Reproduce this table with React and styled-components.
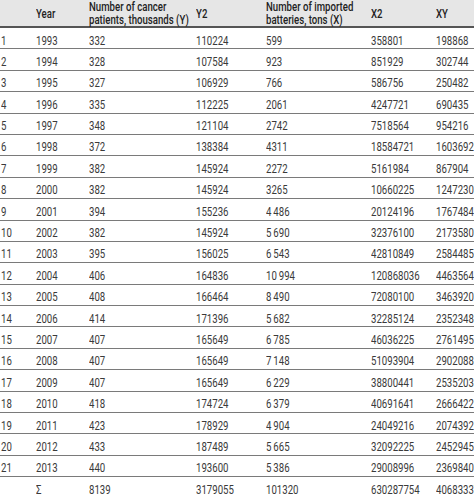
import React from 'react';
import styled, { createGlobalStyle } from 'styled-components';

const GlobalStyle = createGlobalStyle`
  html, body {
    margin: 0;
    padding: 0;
    background: #fff;
  }
  body {
    font-family: Roboto, "Liberation Sans", sans-serif;
  }
`;

const Table = styled.div`
  width: 474px;
  height: 496px;
  overflow: hidden;
`;

const cols = '35px 53px 107px 70px 105px 65px 1fr';

const HeadRow = styled.div`
  display: grid;
  grid-template-columns: ${cols};
  box-sizing: border-box;
  height: 28px;
  padding-left: 1px;
  background: #e6e6e6;
  border-bottom: 2px solid #555;
  align-items: center;
  color: #222;
  font-size: 12.5px;
  font-weight: 500;
  line-height: 13px;
`;

const Row = styled.div`
  display: grid;
  grid-template-columns: ${cols};
  box-sizing: border-box;
  height: 21.4px;
  padding: 5.5px 0 0 1px;
  border-bottom: ${(p) => (p.$last ? 'none' : '1.5px solid #7a7a7a')};
  color: #3a3a3a;
  font-size: 12.5px;
  line-height: 14px;
`;

const Cell = styled.div`
  white-space: nowrap;
`;

// condensed look: Roboto squeezed to Roboto Condensed widths
const Narrow = styled.span`
  display: inline-block;
  transform: scaleX(0.77);
  transform-origin: left center;
`;

const t = '\u2009';
const rows = [
  ['1', '1993', '332', '110224', '599', '358801', '198868'],
  ['2', '1994', '328', '107584', '923', '851929', '302744'],
  ['3', '1995', '327', '106929', '766', '586756', '250482'],
  ['4', '1996', '335', '112225', '2061', '4247721', '690435'],
  ['5', '1997', '348', '121104', '2742', '7518564', '954216'],
  ['6', '1998', '372', '138384', '4311', '18584721', '1603692'],
  ['7', '1999', '382', '145924', '2272', '5161984', '867904'],
  ['8', '2000', '382', '145924', '3265', '10660225', '1247230'],
  ['9', '2001', '394', '155236', `4${t}486`, '20124196', '1767484'],
  ['10', '2002', '382', '145924', `5${t}690`, '32376100', '2173580'],
  ['11', '2003', '395', '156025', `6${t}543`, '42810849', '2584485'],
  ['12', '2004', '406', '164836', `10${t}994`, '120868036', '4463564'],
  ['13', '2005', '408', '166464', `8${t}490`, '72080100', '3463920'],
  ['14', '2006', '414', '171396', `5${t}682`, '32285124', '2352348'],
  ['15', '2007', '407', '165649', `6${t}785`, '46036225', '2761495'],
  ['16', '2008', '407', '165649', `7${t}148`, '51093904', '2902088'],
  ['17', '2009', '407', '165649', `6${t}229`, '38800441', '2535203'],
  ['18', '2010', '418', '174724', `6${t}379`, '40691641', '2666422'],
  ['19', '2011', '423', '178929', `4${t}904`, '24049216', '2074392'],
  ['20', '2012', '433', '187489', `5${t}665`, '32092225', '2452945'],
  ['21', '2013', '440', '193600', `5${t}386`, '29008996', '2369840'],
  ['', 'Σ', '8139', '3179055', '101320', '630287754', '40683337'],
];

const head = [
  [''],
  ['Year'],
  ['Number of cancer', 'patients, thousands (Y)'],
  ['Y2'],
  ['Number of imported', 'batteries, tons (X)'],
  ['X2'],
  ['XY'],
];

export default function App() {
  return (
    <>
      <GlobalStyle />
      <Table>
        <HeadRow>
          {head.map((lines, j) => (
            <Cell key={j}>
              {lines.map((l, k) => (
                <div key={k}>
                  <Narrow>{l}</Narrow>
                </div>
              ))}
            </Cell>
          ))}
        </HeadRow>
        {rows.map((r, i) => (
          <Row key={i} $last={i === rows.length - 1}>
            {r.map((c, j) => (
              <Cell key={j}>
                <Narrow>{c}</Narrow>
              </Cell>
            ))}
          </Row>
        ))}
      </Table>
    </>
  );
}
